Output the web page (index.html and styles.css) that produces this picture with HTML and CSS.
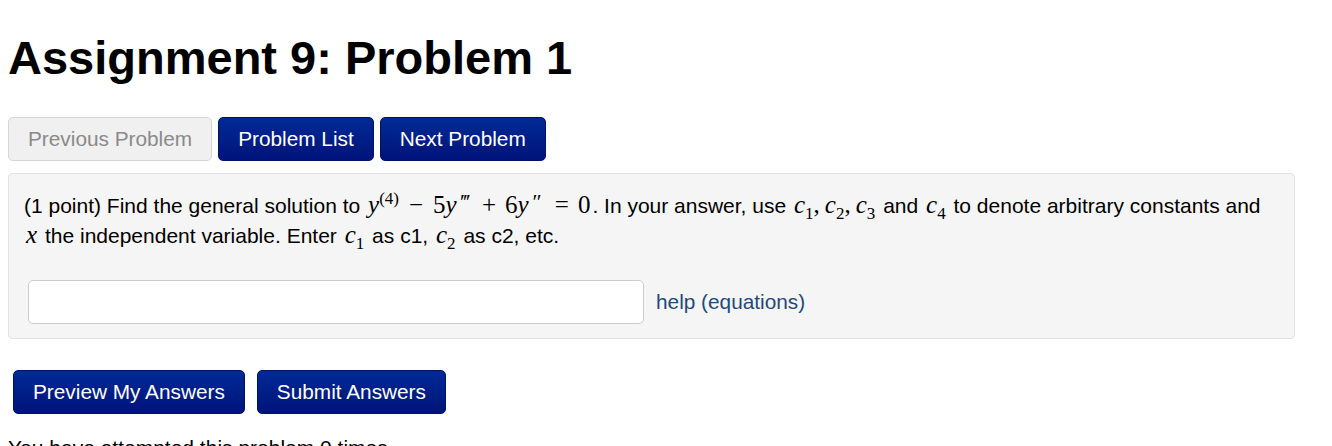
FILE: index.html
```html
<!DOCTYPE html>
<html lang="en">

<head>
  <meta charset="UTF-8">
  <title>Assignment 9: Problem 1</title>
  <link rel="stylesheet" href="styles.css">
</head>

<body>
  <div class="page">
    <h1 class="title">Assignment 9: Problem 1</h1>

    <div class="nav-buttons">
      <a class="btn disabled" href="">Previous Problem</a>
      <a class="btn primary" href="">Problem List</a>
      <a class="btn primary" href="">Next Problem</a>
    </div>

    <div class="well">
      <p class="problem">(1 point) Find the general solution to
        <span class="math"><i>y</i><sup>(4)</sup><span class="minus">&minus;</span>5<i>y</i><sup class="prime">&#8244;</sup><span class="plus">+</span>6<i>y</i><sup class="prime">&#8243;</sup><span class="rel">=</span>0</span>.
        In your answer, use
        <span class="math"><i>c</i><sub>1</sub>,&#8201;<i>c</i><sub>2</sub>,&#8201;<i>c</i><sub>3</sub></span> and
        <span class="math"><i>c</i><sub>4</sub></span> to denote arbitrary constants and
        <span class="nowrap"><span class="math"><i>x</i></span> the</span> independent variable. Enter
        <span class="math"><i>c</i><sub>1</sub></span> as c1, <span class="math"><i>c</i><sub>2</sub></span> as c2, etc.
      </p>
      <div class="answer-row">
        <input class="answer" type="text">
        <a class="help" href="">help (equations)</a>
      </div>
    </div>

    <div class="submit-buttons">
      <button class="btn primary">Preview My Answers</button>
      <button class="btn primary">Submit Answers</button>
    </div>

    <p class="attempts">You have attempted this problem 0 times.</p>
  </div>
</body>

</html>
```

FILE: styles.css
```css
* {
  margin: 0;
  padding: 0;
  box-sizing: border-box;
}

body {
  font-family: "Liberation Sans", Arial, sans-serif;
  font-size: 21px;
  color: #333;
  background: #fff;
}

.page {
  padding: 0 37px 0 8px;
}

.title {
  margin-top: 31px;
  font-size: 47px;
  line-height: 53px;
  font-weight: bold;
  color: #000;
}

.nav-buttons {
  display: flex;
  gap: 6px;
  margin-top: 33px;
}

.btn {
  display: inline-block;
  height: 44px;
  padding: 0 19px;
  font-family: "Liberation Sans", Arial, sans-serif;
  font-size: 20.8px;
  line-height: 42px;
  text-decoration: none;
  border-radius: 5px;
  border: 1px solid transparent;
}

.btn.primary {
  color: #fff;
  background: linear-gradient(#002a96, #00137a);
  border-color: #001366;
}

.btn.disabled {
  color: #8a8a8a;
  background: #f0f0f0;
  border-color: #d6d6d6;
}

.well {
  margin-top: 12px;
  padding: 17px 15px 14px;
  background: #f5f5f5;
  border: 1px solid #e3e3e3;
  border-radius: 4px;
}

.problem {
  line-height: 30px;
  color: #000;
}

.nowrap {
  white-space: nowrap;
}

.math {
  font-family: "Liberation Serif", "Times New Roman", serif;
  font-size: 25px;
  line-height: 1;
  white-space: nowrap;
  margin: 0 2px;
}

.math i {
  font-style: italic;
}

.math sup,
.math sub {
  font-size: 17px;
  line-height: 0;
}

.math sup.prime {
  font-size: 22px;
  margin-left: 4px;
  vertical-align: 4px;
}

.minus {
  margin: 0 10px;
}

.plus {
  margin: 0 9px 0 12px;
}

.rel {
  margin: 0 9px 0 13px;
}

.answer-row {
  display: flex;
  align-items: center;
  gap: 12px;
  margin-top: 29px;
  padding-left: 4px;
}

.answer {
  width: 616px;
  height: 44px;
  background: #fff;
  border: 1px solid #ccc;
  border-radius: 5px;
}

.help {
  font-size: 20.8px;
  color: #1f4a7e;
  text-decoration: none;
}

.submit-buttons {
  display: flex;
  gap: 12px;
  margin-top: 31px;
  padding-left: 5px;
}

.attempts {
  margin-top: 22px;
  color: #000;
}
```
